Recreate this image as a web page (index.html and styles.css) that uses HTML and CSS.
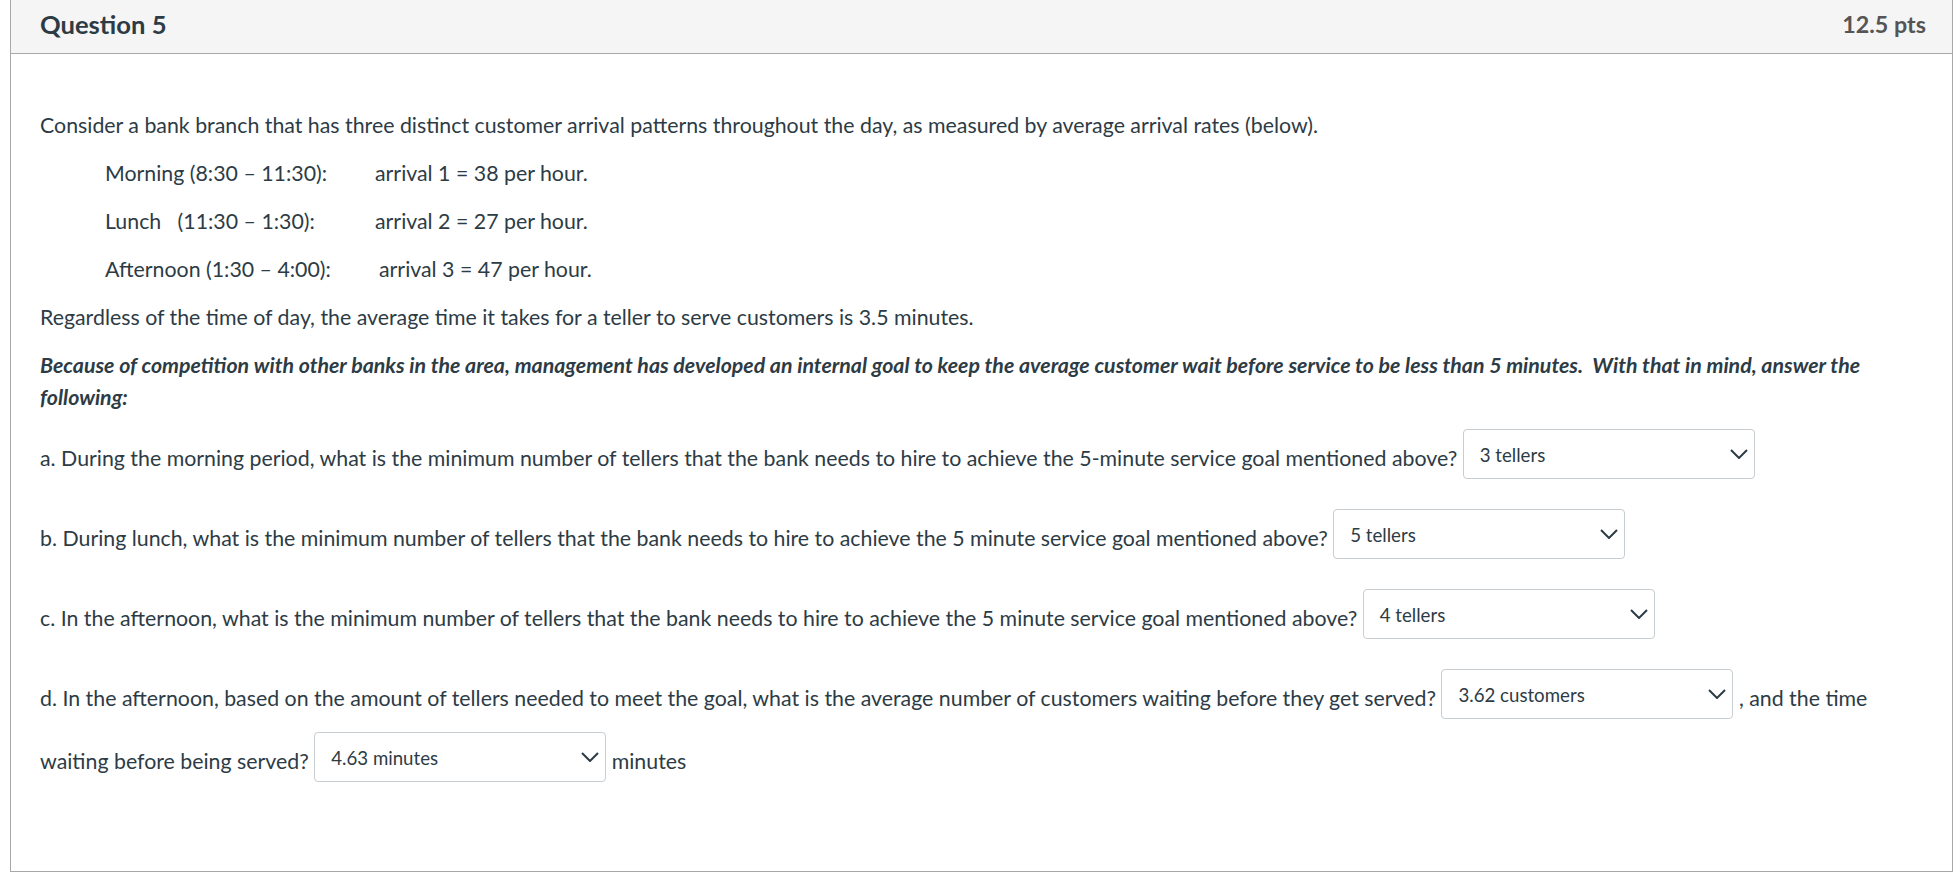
FILE: index.html
```html
<!DOCTYPE html>
<html lang="en">
<head>
<meta charset="utf-8">
<title>Question 5</title>
<link rel="stylesheet" href="styles.css">
</head>
<body>
<div class="question">
  <div class="header">
    <span class="title">Question 5</span>
    <span class="pts">12.5 pts</span>
  </div>
  <div class="content">
    <p>Consider a bank branch that has three distinct customer arrival patterns throughout the day, as measured by average arrival rates (below).</p>
    <p class="rate"><span class="lbl">Morning (8:30 – 11:30):</span>arrival 1 = 38 per hour.</p>
    <p class="rate"><span class="lbl">Lunch&nbsp;&nbsp; (11:30 – 1:30):</span>arrival 2 = 27 per hour.</p>
    <p class="rate"><span class="lbl lbl-wide">Afternoon (1:30 – 4:00):</span>arrival 3 = 47 per hour.</p>
    <p>Regardless of the time of day, the average time it takes for a teller to serve customers is 3.5 minutes.</p>
    <p class="goal">Because of competition with other banks in the area, management has developed an internal goal to keep the average customer wait before service to be less than 5 minutes.&nbsp; With that in mind, answer the following:</p>
    <p class="q">a. During the morning period, what is the minimum number of tellers that the bank needs to hire to achieve the 5-minute service goal mentioned above? <span class="dd"><span class="dd-text">3 tellers</span><svg class="chev" width="18" height="10" viewBox="0 0 18 10"><path d="M1 1 L9 9 L17 1" fill="none" stroke="#2d3b45" stroke-width="2"/></svg></span></p>
    <p class="q">b. During lunch, what is the minimum number of tellers that the bank needs to hire to achieve the 5 minute service goal mentioned above? <span class="dd"><span class="dd-text">5 tellers</span><svg class="chev" width="18" height="10" viewBox="0 0 18 10"><path d="M1 1 L9 9 L17 1" fill="none" stroke="#2d3b45" stroke-width="2"/></svg></span></p>
    <p class="q">c. In the afternoon, what is the minimum number of tellers that the bank needs to hire to achieve the 5 minute service goal mentioned above? <span class="dd"><span class="dd-text">4 tellers</span><svg class="chev" width="18" height="10" viewBox="0 0 18 10"><path d="M1 1 L9 9 L17 1" fill="none" stroke="#2d3b45" stroke-width="2"/></svg></span></p>
    <p class="q">d. In the afternoon, based on the amount of tellers needed to meet the goal, what is the average number of customers waiting before they get served? <span class="dd"><span class="dd-text">3.62 customers</span><svg class="chev" width="18" height="10" viewBox="0 0 18 10"><path d="M1 1 L9 9 L17 1" fill="none" stroke="#2d3b45" stroke-width="2"/></svg></span> , and the time waiting before being served? <span class="dd"><span class="dd-text">4.63 minutes</span><svg class="chev" width="18" height="10" viewBox="0 0 18 10"><path d="M1 1 L9 9 L17 1" fill="none" stroke="#2d3b45" stroke-width="2"/></svg></span> minutes</p>
  </div>
</div>
</body>
</html>
```

FILE: styles.css
```css
html, body {
  margin: 0;
  padding: 0;
  background: #ffffff;
}
body {
  padding: 0 7px 0 10px;
  font-family: Lato, "Open Sans", "Liberation Sans", sans-serif;
  color: #2d3b45;
}
.question {
  box-sizing: border-box;
  height: 872px;
  border: 1px solid #a8a8a8;
  border-top: none;
  background: #ffffff;
}
.header {
  box-sizing: border-box;
  height: 54px;
  display: flex;
  align-items: center;
  justify-content: space-between;
  padding: 0 26px 5px 29px;
  background: #f5f5f5;
  border-bottom: 1px solid #a8a8a8;
}
.title {
  font-size: 25.6px;
  font-weight: 700;
  color: #2d3b45;
}
.pts {
  font-size: 23.3px;
  font-weight: 700;
  color: #555555;
}
.content {
  padding: 55px 29px 0 29px;
  font-size: 21.33px;
  line-height: 32px;
}
.content p {
  margin: 0 0 16px 0;
}
.rate {
  padding-left: 65px;
}
.lbl {
  display: inline-block;
  width: 270px;
}
.lbl-wide {
  width: 274px;
}
.goal {
  font-weight: 700;
  font-style: italic;
}
.content p.q {
  margin-bottom: 17px;
}
.dd {
  box-sizing: border-box;
  display: inline-flex;
  align-items: flex-start;
  justify-content: space-between;
  width: 292px;
  height: 50px;
  padding: 15px 6px 0 16px;
  border: 1px solid #c7cdd1;
  border-radius: 4px;
  background: #ffffff;
  vertical-align: 4px;
  margin-bottom: 13px;
}
.dd-text {
  font-size: 18.67px;
  line-height: 20px;
  color: #2d3b45;
}
.chev {
  align-self: center;
  margin-top: -16px;
}
```
